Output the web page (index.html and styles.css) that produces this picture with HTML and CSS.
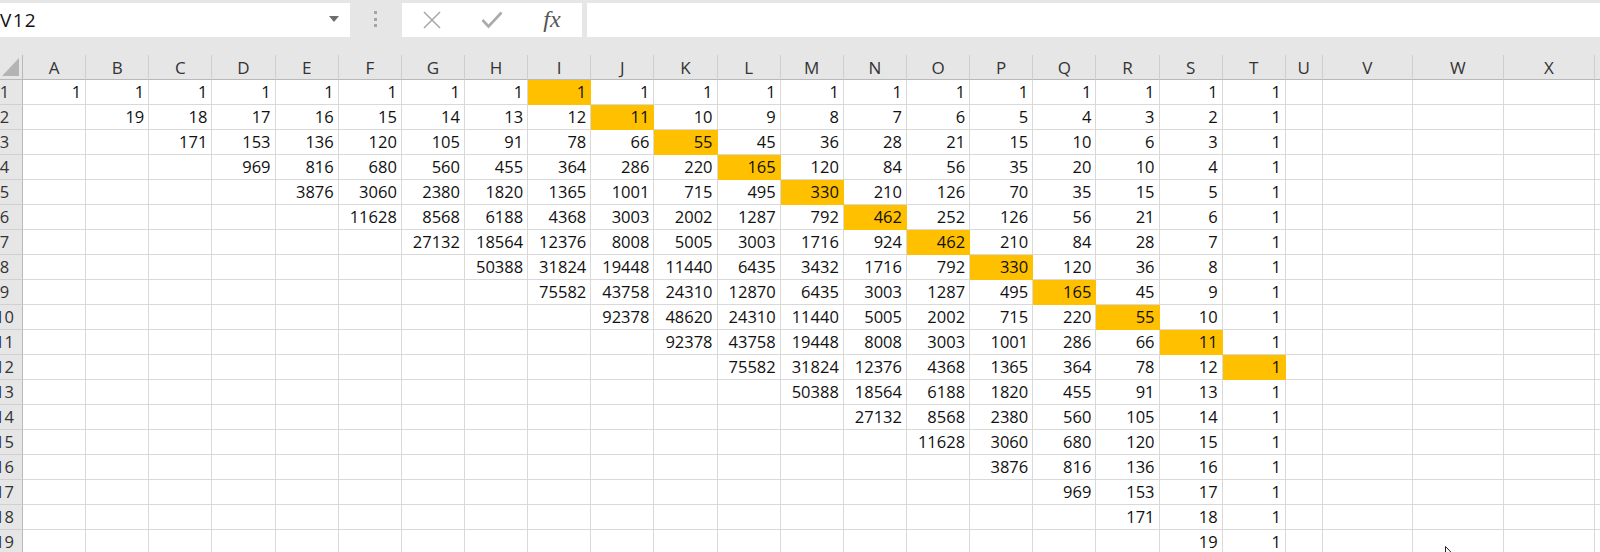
FILE: index.html
```html
<!DOCTYPE html>
<html lang="en">
<head>
<meta charset="utf-8">
<title>Sheet</title>
<link rel="stylesheet" href="styles.css">
</head>
<body>
<div class="app">
  <div class="fbar">
    <div class="namebox"><span class="ref">V12</span><span class="caret"></span></div>
    <div class="grip"><i></i><i></i><i></i></div>
    <div class="fbtns">
      <svg class="ico" width="20" height="20" viewBox="0 0 20 20"><path d="M2 2 L18 18 M18 2 L2 18" stroke="#a9a9a9" stroke-width="1.6" fill="none"/></svg>
      <svg class="ico" width="22" height="18" viewBox="0 0 22 18"><path d="M1.5 9 L7.5 15.5 L20.5 1.5" stroke="#ababab" stroke-width="2.6" fill="none"/></svg>
      <span class="fx">fx</span>
    </div>
    <div class="finput"></div>
  </div>
  <div class="sheet">
    <div class="hd corner"><svg width="17" height="18" viewBox="0 0 17 18"><path d="M17 0 L17 18 L0 18 Z" fill="#b4b4b4"/></svg></div>
    <div class="hd">A</div><div class="hd">B</div><div class="hd">C</div><div class="hd">D</div><div class="hd">E</div><div class="hd">F</div><div class="hd">G</div><div class="hd">H</div><div class="hd">I</div><div class="hd">J</div><div class="hd">K</div><div class="hd">L</div><div class="hd">M</div><div class="hd">N</div><div class="hd">O</div><div class="hd">P</div><div class="hd">Q</div><div class="hd">R</div><div class="hd">S</div><div class="hd">T</div><div class="hd">U</div><div class="hd">V</div><div class="hd">W</div><div class="hd">X</div><div class="hd"></div>

    <div class="rh">1</div>
    <div>1</div><div>1</div><div>1</div><div>1</div><div>1</div><div>1</div><div>1</div><div>1</div><div class="h">1</div><div>1</div><div>1</div><div>1</div><div>1</div><div>1</div><div>1</div><div>1</div><div>1</div><div>1</div><div>1</div><div>1</div>
    <div></div><div></div><div></div><div></div><div></div>

    <div class="rh">2</div>
    <div></div><div>19</div><div>18</div><div>17</div><div>16</div><div>15</div><div>14</div><div>13</div><div>12</div><div class="h">11</div><div>10</div><div>9</div><div>8</div><div>7</div><div>6</div><div>5</div><div>4</div><div>3</div><div>2</div><div>1</div>
    <div></div><div></div><div></div><div></div><div></div>

    <div class="rh">3</div>
    <div></div><div></div><div>171</div><div>153</div><div>136</div><div>120</div><div>105</div><div>91</div><div>78</div><div>66</div><div class="h">55</div><div>45</div><div>36</div><div>28</div><div>21</div><div>15</div><div>10</div><div>6</div><div>3</div><div>1</div>
    <div></div><div></div><div></div><div></div><div></div>

    <div class="rh">4</div>
    <div></div><div></div><div></div><div>969</div><div>816</div><div>680</div><div>560</div><div>455</div><div>364</div><div>286</div><div>220</div><div class="h">165</div><div>120</div><div>84</div><div>56</div><div>35</div><div>20</div><div>10</div><div>4</div><div>1</div>
    <div></div><div></div><div></div><div></div><div></div>

    <div class="rh">5</div>
    <div></div><div></div><div></div><div></div><div>3876</div><div>3060</div><div>2380</div><div>1820</div><div>1365</div><div>1001</div><div>715</div><div>495</div><div class="h">330</div><div>210</div><div>126</div><div>70</div><div>35</div><div>15</div><div>5</div><div>1</div>
    <div></div><div></div><div></div><div></div><div></div>

    <div class="rh">6</div>
    <div></div><div></div><div></div><div></div><div></div><div>11628</div><div>8568</div><div>6188</div><div>4368</div><div>3003</div><div>2002</div><div>1287</div><div>792</div><div class="h">462</div><div>252</div><div>126</div><div>56</div><div>21</div><div>6</div><div>1</div>
    <div></div><div></div><div></div><div></div><div></div>

    <div class="rh">7</div>
    <div></div><div></div><div></div><div></div><div></div><div></div><div>27132</div><div>18564</div><div>12376</div><div>8008</div><div>5005</div><div>3003</div><div>1716</div><div>924</div><div class="h">462</div><div>210</div><div>84</div><div>28</div><div>7</div><div>1</div>
    <div></div><div></div><div></div><div></div><div></div>

    <div class="rh">8</div>
    <div></div><div></div><div></div><div></div><div></div><div></div><div></div><div>50388</div><div>31824</div><div>19448</div><div>11440</div><div>6435</div><div>3432</div><div>1716</div><div>792</div><div class="h">330</div><div>120</div><div>36</div><div>8</div><div>1</div>
    <div></div><div></div><div></div><div></div><div></div>

    <div class="rh">9</div>
    <div></div><div></div><div></div><div></div><div></div><div></div><div></div><div></div><div>75582</div><div>43758</div><div>24310</div><div>12870</div><div>6435</div><div>3003</div><div>1287</div><div>495</div><div class="h">165</div><div>45</div><div>9</div><div>1</div>
    <div></div><div></div><div></div><div></div><div></div>

    <div class="rh">10</div>
    <div></div><div></div><div></div><div></div><div></div><div></div><div></div><div></div><div></div><div>92378</div><div>48620</div><div>24310</div><div>11440</div><div>5005</div><div>2002</div><div>715</div><div>220</div><div class="h">55</div><div>10</div><div>1</div>
    <div></div><div></div><div></div><div></div><div></div>

    <div class="rh">11</div>
    <div></div><div></div><div></div><div></div><div></div><div></div><div></div><div></div><div></div><div></div><div>92378</div><div>43758</div><div>19448</div><div>8008</div><div>3003</div><div>1001</div><div>286</div><div>66</div><div class="h">11</div><div>1</div>
    <div></div><div></div><div></div><div></div><div></div>

    <div class="rh">12</div>
    <div></div><div></div><div></div><div></div><div></div><div></div><div></div><div></div><div></div><div></div><div></div><div>75582</div><div>31824</div><div>12376</div><div>4368</div><div>1365</div><div>364</div><div>78</div><div>12</div><div class="h">1</div>
    <div></div><div></div><div></div><div></div><div></div>

    <div class="rh">13</div>
    <div></div><div></div><div></div><div></div><div></div><div></div><div></div><div></div><div></div><div></div><div></div><div></div><div>50388</div><div>18564</div><div>6188</div><div>1820</div><div>455</div><div>91</div><div>13</div><div>1</div>
    <div></div><div></div><div></div><div></div><div></div>

    <div class="rh">14</div>
    <div></div><div></div><div></div><div></div><div></div><div></div><div></div><div></div><div></div><div></div><div></div><div></div><div></div><div>27132</div><div>8568</div><div>2380</div><div>560</div><div>105</div><div>14</div><div>1</div>
    <div></div><div></div><div></div><div></div><div></div>

    <div class="rh">15</div>
    <div></div><div></div><div></div><div></div><div></div><div></div><div></div><div></div><div></div><div></div><div></div><div></div><div></div><div></div><div>11628</div><div>3060</div><div>680</div><div>120</div><div>15</div><div>1</div>
    <div></div><div></div><div></div><div></div><div></div>

    <div class="rh">16</div>
    <div></div><div></div><div></div><div></div><div></div><div></div><div></div><div></div><div></div><div></div><div></div><div></div><div></div><div></div><div></div><div>3876</div><div>816</div><div>136</div><div>16</div><div>1</div>
    <div></div><div></div><div></div><div></div><div></div>

    <div class="rh">17</div>
    <div></div><div></div><div></div><div></div><div></div><div></div><div></div><div></div><div></div><div></div><div></div><div></div><div></div><div></div><div></div><div></div><div>969</div><div>153</div><div>17</div><div>1</div>
    <div></div><div></div><div></div><div></div><div></div>

    <div class="rh">18</div>
    <div></div><div></div><div></div><div></div><div></div><div></div><div></div><div></div><div></div><div></div><div></div><div></div><div></div><div></div><div></div><div></div><div></div><div>171</div><div>18</div><div>1</div>
    <div></div><div></div><div></div><div></div><div></div>

    <div class="rh">19</div>
    <div></div><div></div><div></div><div></div><div></div><div></div><div></div><div></div><div></div><div></div><div></div><div></div><div></div><div></div><div></div><div></div><div></div><div></div><div>19</div><div>1</div>
    <div></div><div></div><div></div><div></div><div></div>
  </div>
  <svg class="cursor" width="12" height="20" viewBox="0 0 12 20"><path d="M0.5 0.5 L0.5 16 L4.2 12.5 L6.8 18.5 L9 17.5 L6.5 11.6 L11.3 11.6 Z" fill="#fff" stroke="#222" stroke-width="1"/></svg>
</div>
</body>
</html>
```

FILE: styles.css
```css
html, body {
  margin: 0;
  padding: 0;
}

body {
  width: 1600px;
  height: 552px;
  overflow: hidden;
  background: #e6e6e6;
  font-family: "Open Sans", "Noto Sans", sans-serif;
}

.app {
  position: relative;
  width: 1600px;
  height: 552px;
  overflow: hidden;
}

/* ---------- formula bar ---------- */
.fbar {
  display: flex;
  align-items: flex-start;
  height: 52px;
  padding-top: 3px;
}

.namebox {
  width: 350px;
  height: 34px;
  box-sizing: border-box;
  background: #fff;
  display: flex;
  align-items: center;
  justify-content: space-between;
  padding-right: 11px;
}

.ref {
  font-size: 19px;
  letter-spacing: 1.3px;
  color: #111;
  line-height: 34px;
}

.caret {
  width: 0;
  height: 0;
  border-left: 5px solid transparent;
  border-right: 5px solid transparent;
  border-top: 6px solid #6d6d6d;
  margin-bottom: 3px;
}

.grip {
  display: flex;
  flex-direction: column;
  gap: 3.6px;
  margin: 8px 0 0 24px;
}

.grip i {
  display: block;
  width: 3px;
  height: 3px;
  background: #a5a5a5;
}

.fbtns {
  margin-left: 25px;
  width: 180px;
  height: 34px;
  background: #fff;
  display: grid;
  grid-template-columns: repeat(3, 60px);
  align-items: center;
  justify-items: center;
}

.ico {
  display: block;
}

.fx {
  font-family: "Liberation Serif", "DejaVu Serif", serif;
  font-style: italic;
  font-size: 24px;
  color: #555;
  line-height: 30px;
  margin-top: -2px;
}

.finput {
  flex: 1;
  margin-left: 5px;
  height: 34px;
  background: #fff;
}

/* ---------- grid ---------- */
.sheet {
  display: grid;
  grid-template-columns: 36px repeat(20, 63.15px) 37px 90px 91px 91px 60px;
  grid-auto-rows: 25px;
  margin-left: -13px;
}

.sheet > div {
  box-sizing: border-box;
  background: #fff;
  border-right: 1px solid #d9d9d9;
  border-bottom: 1px solid #d9d9d9;
  text-align: right;
  padding-right: 4px;
  font-size: 16.5px;
  line-height: 24px;
  color: #111;
  white-space: nowrap;
  overflow: hidden;
}

.sheet > .hd {
  background: #e6e6e6;
  text-align: center;
  padding: 2px 0 0;
  font-size: 17px;
  line-height: 22px;
  color: #333;
  border-right-color: #cfcfcf;
  border-bottom-color: #b9b9b9;
}

.sheet > .corner {
  display: flex;
  justify-content: flex-end;
  align-items: flex-end;
  padding: 0 3px 3px 0;
  border-right-color: #b9b9b9;
}

.sheet > .rh {
  background: #e6e6e6;
  text-align: center;
  padding: 0;
  color: #333;
  border-right-color: #b9b9b9;
  border-bottom-color: #d0d0d0;
}

.sheet > .h {
  background: #ffc000;
  border-right-color: #ffc000;
  border-bottom-color: #ffc000;
}

.cursor {
  position: absolute;
  left: 1445px;
  top: 546px;
}
```
